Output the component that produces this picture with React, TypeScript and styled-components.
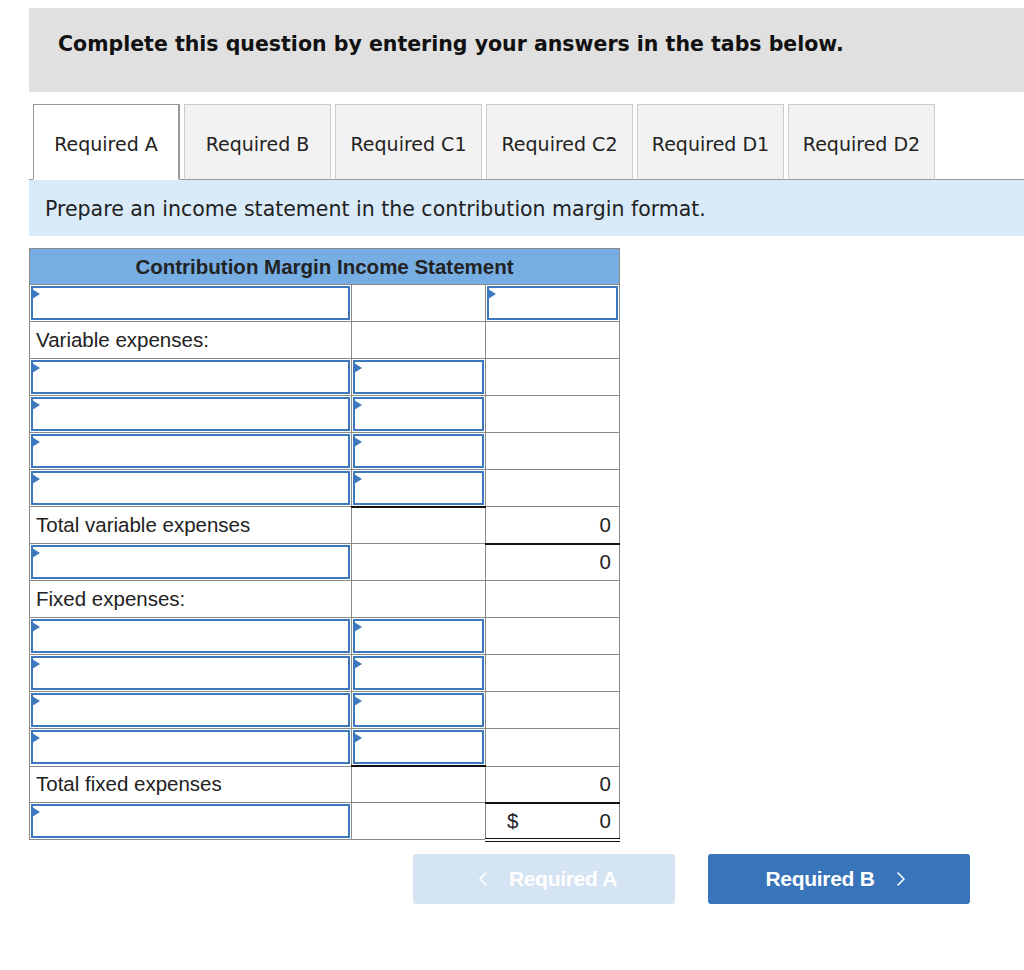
import styled, { createGlobalStyle } from 'styled-components';
import { ChevronLeft, ChevronRight } from 'lucide-react';

type CellKind = 'input' | 'label' | 'empty' | 'num' | 'dollar';

type Cell = {
  kind: CellKind;
  text?: string;
  rule?: 'single' | 'double';
};

const tabs = ['Required A', 'Required B', 'Required C1', 'Required C2', 'Required D1', 'Required D2'];

const inp: Cell = { kind: 'input' };
const emp: Cell = { kind: 'empty' };

const rows: Cell[][] = [
  [inp, emp, inp],
  [{ kind: 'label', text: 'Variable expenses:' }, emp, emp],
  [inp, inp, emp],
  [inp, inp, emp],
  [inp, inp, emp],
  [inp, { kind: 'input', rule: 'single' }, emp],
  [{ kind: 'label', text: 'Total variable expenses' }, emp, { kind: 'num', text: '0', rule: 'single' }],
  [inp, emp, { kind: 'num', text: '0' }],
  [{ kind: 'label', text: 'Fixed expenses:' }, emp, emp],
  [inp, inp, emp],
  [inp, inp, emp],
  [inp, inp, emp],
  [inp, { kind: 'input', rule: 'single' }, emp],
  [{ kind: 'label', text: 'Total fixed expenses' }, emp, { kind: 'num', text: '0', rule: 'single' }],
  [inp, emp, { kind: 'dollar', text: '0', rule: 'double' }],
];

export default function App() {
  return (
    <>
      <GlobalStyle />
      <Page>
        <Banner>Complete this question by entering your answers in the tabs below.</Banner>

        <TabBar>
          {tabs.map((t, i) => (
            <Tab key={t} $active={i === 0}>
              {t}
            </Tab>
          ))}
        </TabBar>

        <Instruction>Prepare an income statement in the contribution margin format.</Instruction>

        <Statement>
          <thead>
            <tr>
              <HeadCell colSpan={3}>Contribution Margin Income Statement</HeadCell>
            </tr>
          </thead>
          <tbody>
            {rows.map((row, r) => (
              <tr key={r}>
                {row.map((cell, c) => (
                  <Td key={c} $col={c} $rule={cell.rule} $kind={cell.kind}>
                    {cell.kind === 'input' && <InputBox />}
                    {cell.kind === 'label' && cell.text}
                    {cell.kind === 'num' && cell.text}
                    {cell.kind === 'dollar' && (
                      <DollarLine>
                        <span>$</span>
                        <span>{cell.text}</span>
                      </DollarLine>
                    )}
                  </Td>
                ))}
              </tr>
            ))}
          </tbody>
        </Statement>

        <NavRow>
          <NavButton $disabled>
            <ChevronLeft size={24} strokeWidth={1.6} />
            <span>Required A</span>
          </NavButton>
          <NavButton>
            <span>Required B</span>
            <ChevronRight size={24} strokeWidth={1.6} />
          </NavButton>
        </NavRow>
      </Page>
    </>
  );
}

const GlobalStyle = createGlobalStyle`
  body {
    margin: 0;
    background: #fff;
    font-family: "DejaVu Sans", Verdana, sans-serif;
    color: #222;
  }
`;

const Page = styled.div`
  padding: 8px 0 40px 29px;
`;

const Banner = styled.div`
  display: flex;
  align-items: center;
  box-sizing: border-box;
  height: 84px;
  padding: 0 0 12px 29px;
  background: #e0e0e0;
  font-size: 20.5px;
  font-weight: bold;
  color: #111;
`;

const TabBar = styled.div`
  display: flex;
  gap: 4px;
  margin-top: 12px;
  padding-left: 4px;
  border-bottom: 1px solid #999;
`;

const Tab = styled.div<{ $active?: boolean }>`
  display: flex;
  align-items: center;
  justify-content: center;
  box-sizing: border-box;
  width: 147px;
  height: 76px;
  margin-bottom: -1px;
  padding-top: 3px;
  font-size: 19px;
  color: #222;
  background: ${(p) => (p.$active ? '#fff' : '#f2f2f2')};
  border: 1px solid ${(p) => (p.$active ? '#999' : '#ccc')};
  border-bottom: 1px solid ${(p) => (p.$active ? '#fff' : '#999')};
  ${(p) => (p.$active ? 'border-width: 1px 2px 1px 1px;' : '')}
`;

const Instruction = styled.div`
  display: flex;
  align-items: center;
  box-sizing: border-box;
  height: 56px;
  padding: 2px 0 0 16px;
  background: #d9eaf8;
  font-size: 20.5px;
  color: #222;
`;

const Statement = styled.table`
  margin-top: 12px;
  border-collapse: collapse;
  font-family: "Liberation Sans", Arial, sans-serif;
  font-size: 20.5px;
  color: #222;
`;

const HeadCell = styled.th`
  height: 35px;
  padding: 0;
  background: #76ade3;
  border: 1px solid #8a8a8a;
  font-weight: bold;
  font-size: 20.5px;
  color: #222;
  text-align: center;
`;

const Td = styled.td<{ $col: number; $rule?: 'single' | 'double'; $kind: CellKind }>`
  box-sizing: border-box;
  width: ${(p) => (p.$col === 0 ? '322px' : '134px')};
  height: 36.85px;
  padding: ${(p) =>
    p.$kind === 'input' ? '1px' : p.$kind === 'label' ? '0 6px' : '0 8px 0 21px'};
  border: 1px solid #8a8a8a;
  ${(p) => p.$rule === 'single' && 'border-bottom: 2px solid #111;'}
  ${(p) => p.$rule === 'double' && 'border-bottom: 4px double #111;'}
  text-align: ${(p) => (p.$kind === 'num' ? 'right' : 'left')};
  vertical-align: middle;
  white-space: nowrap;
`;

const InputBox = styled.div`
  position: relative;
  box-sizing: border-box;
  height: 34px;
  background: #fff;
  border: 2px solid #3b78bd;

  &::before {
    content: '';
    position: absolute;
    top: 1px;
    left: -1px;
    border-top: 5px solid transparent;
    border-bottom: 5px solid transparent;
    border-left: 8px solid #3b78bd;
  }
`;

const DollarLine = styled.div`
  display: flex;
  justify-content: space-between;
`;

const NavRow = styled.div`
  display: flex;
  justify-content: flex-end;
  gap: 33px;
  margin-top: 12px;
  padding-right: 54px;
`;

const NavButton = styled.div<{ $disabled?: boolean }>`
  display: flex;
  align-items: center;
  justify-content: center;
  gap: 14px;
  width: 262px;
  height: 50px;
  border-radius: 3px;
  background: ${(p) => (p.$disabled ? '#d5e4f2' : '#3874ba')};
  color: #fff;
  font-family: "Liberation Sans", Arial, sans-serif;
  font-size: 21px;
  font-weight: bold;
  letter-spacing: -0.3px;
`;
